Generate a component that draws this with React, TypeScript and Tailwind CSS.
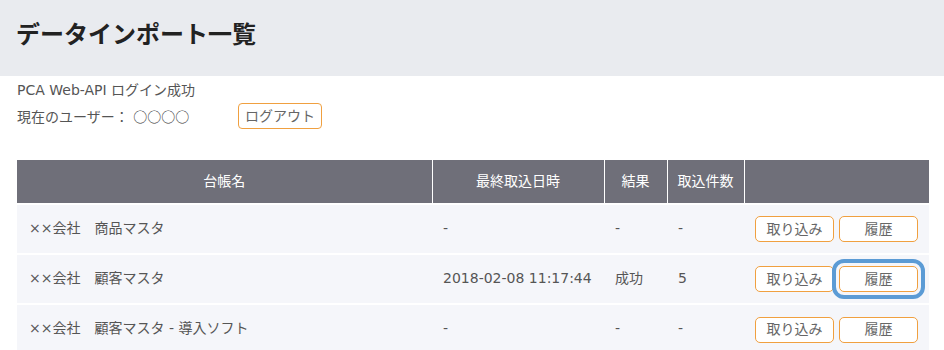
import React from 'react';

type Row = {
  name: string;
  date: string;
  result: string;
  count: string;
  focused?: boolean;
};

const rows: Row[] = [
  { name: '××会社　商品マスタ', date: '-', result: '-', count: '-' },
  { name: '××会社　顧客マスタ', date: '2018-02-08 11:17:44', result: '成功', count: '5', focused: true },
  { name: '××会社　顧客マスタ - 導入ソフト', date: '-', result: '-', count: '-' },
];

const font = { fontFamily: '"DejaVu Sans", "Noto Sans CJK JP", sans-serif' };

export default function App() {
  return (
    <div className="min-h-[350px] bg-white text-[#555]" style={font}>
      {/* Header */}
      <header className="h-[76px] bg-[#e9ebef] px-4 pt-[22px]">
        <h1 className="text-[24px] font-bold text-[#222] leading-[26px]">データインポート一覧</h1>
      </header>

      {/* Login info */}
      <div className="px-[17px] pt-[4px] text-[14px] leading-[20px]">
        <div>PCA Web-API ログイン成功</div>
        <div className="flex items-center mt-[3px]">
          <span className="w-[221px]">
            現在のユーザー：{' '}
            <span className="font-['Noto_Sans_CJK_JP'] text-[#333]">○○○○</span>
          </span>
          <button className="h-[26px] px-[6px] border border-[#f0a040] rounded-[4px] bg-white text-[#666] text-[14px]">
            ログアウト
          </button>
        </div>
      </div>

      {/* Table */}
      <div className="px-[17px] pt-[31px]">
        <table className="w-[912px] border-collapse text-[14px] table-fixed">
          <colgroup>
            <col className="w-[415px]" />
            <col className="w-[172px]" />
            <col className="w-[63px]" />
            <col className="w-[77px]" />
            <col className="w-[185px]" />
          </colgroup>
          <thead>
            <tr className="bg-[#6f6f79] text-white h-[44px]">
              <th className="font-normal border-r border-white">台帳名</th>
              <th className="font-normal border-r border-white">最終取込日時</th>
              <th className="font-normal border-r border-white">結果</th>
              <th className="font-normal border-r border-white">取込件数</th>
              <th className="font-normal"></th>
            </tr>
          </thead>
          <tbody>
            {rows.map((r) => (
              <tr key={r.name} className="bg-[#f5f6fa] h-[50px] border-t-2 border-white">
                <td className="pl-[12px] pb-[2px]">{r.name}</td>
                <td className="pl-[11px] pb-[2px]">{r.date}</td>
                <td className="pl-[11px] pb-[2px]">{r.result}</td>
                <td className="pl-[11px] pb-[2px]">{r.count}</td>
                <td className="pl-[11px]">
                  <div className="flex gap-[5px]">
                    <button className="w-[79px] h-[26px] border border-[#f0a040] rounded-[5px] bg-white text-[#666] text-[14px]">
                      取り込み
                    </button>
                    <button
                      className={`w-[79px] h-[26px] border border-[#f0a040] rounded-[5px] bg-white text-[#666] text-[14px] ${
                        r.focused ? 'outline-4 outline-[#5b9bd5] outline-offset-[3px]' : ''
                      }`}
                    >
                      履歴
                    </button>
                  </div>
                </td>
              </tr>
            ))}
          </tbody>
        </table>
      </div>
    </div>
  );
}
